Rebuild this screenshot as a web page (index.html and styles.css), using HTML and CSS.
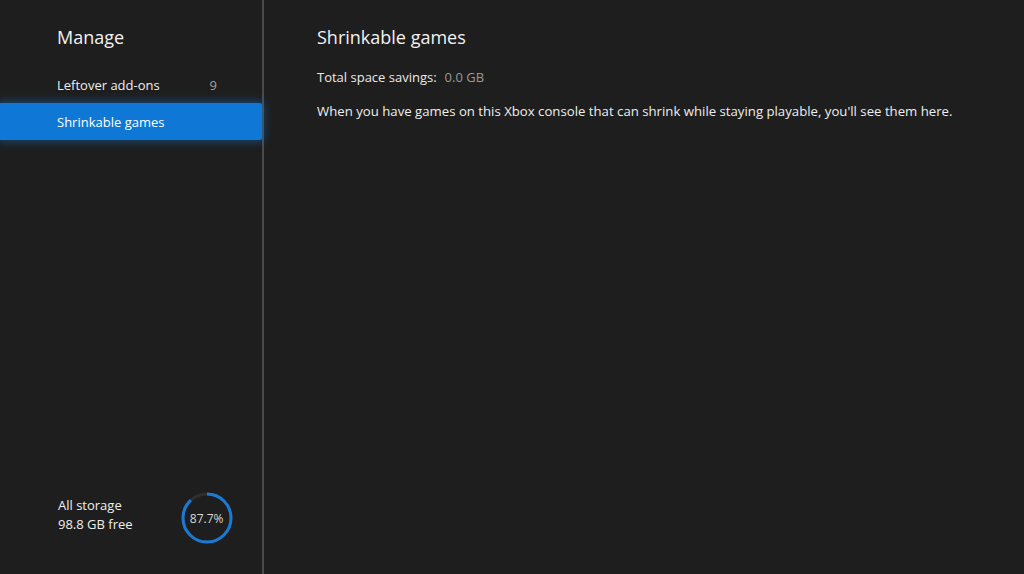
FILE: index.html
```html
<!DOCTYPE html>
<html>
<head>
<meta charset="utf-8">
<link rel="stylesheet" href="styles.css">
</head>
<body>
<div class="app">
  <aside class="sidebar">
    <h1 class="title">Manage</h1>
    <nav class="nav">
      <div class="item"><span>Leftover add-ons</span><span class="count">9</span></div>
      <div class="item active"><span>Shrinkable games</span></div>
    </nav>
    <div class="storage">
      <div class="storage-text">
        <div>All storage</div>
        <div>98.8 GB free</div>
      </div>
      <div class="ring">
        <svg width="54" height="54" viewBox="0 0 54 54">
          <circle cx="27" cy="27" r="24" fill="none" stroke="#2e2e2e" stroke-width="3"/>
          <circle cx="27" cy="27" r="24" fill="none" stroke="#1a7ad4" stroke-width="3" stroke-dasharray="132.25 150.8" transform="rotate(-90 27 27)"/>
        </svg>
        <span class="pct">87.7%</span>
      </div>
    </div>
  </aside>
  <main class="content">
    <h2 class="title">Shrinkable games</h2>
    <div class="savings"><span>Total space savings:</span><span class="muted">0.0 GB</span></div>
    <p class="desc">When you have games on this Xbox console that can shrink while staying playable, you'll see them here.</p>
  </main>
</div>
</body>
</html>
```
FILE: styles.css
```css
* { box-sizing: border-box; }
html, body { margin: 0; height: 100%; }
body {
  background: #1e1e1e;
  color: #f0f0f0;
  font-family: "Open Sans", "Noto Sans", sans-serif;
  overflow: hidden;
}
.app { display: flex; height: 574px; }
.sidebar {
  width: 264px;
  flex: none;
  border-right: 2px solid #4a4a4a;
  display: flex;
  flex-direction: column;
  padding-top: 24px;
}
.title {
  margin: 0;
  font-size: 18px;
  font-weight: 400;
  line-height: 26px;
  color: #f2f2f2;
}
.sidebar .title { padding-left: 57px; }
.nav { margin-top: 16px; display: flex; flex-direction: column; }
.item {
  height: 37px;
  display: flex;
  align-items: center;
  justify-content: space-between;
  padding: 0 45px 0 57px;
  font-size: 13px;
  color: #eeeeee;
}
.item .count { color: #a0a0a0; }
.item.active {
  width: 262px;
  background: #0f78d6;
  color: #ffffff;
  box-shadow: 0 0 8px 2px rgba(20, 120, 215, 0.45);
  border-radius: 0 2px 2px 0;
}
.storage {
  margin-top: auto;
  margin-bottom: 29px;
  display: flex;
  align-items: center;
  padding-left: 58px;
  gap: 47px;
}
.storage-text {
  font-size: 13px;
  line-height: 19px;
  color: #eeeeee;
  padding-bottom: 6px;
}
.ring { position: relative; width: 54px; height: 54px; }
.ring svg { display: block; }
.pct {
  position: absolute;
  inset: 0;
  display: flex;
  align-items: center;
  justify-content: center;
  font-size: 12px;
  color: #d8d8d8;
}
.content { padding: 24px 0 0 53px; flex: 1; }
.savings {
  margin-top: 18px;
  font-size: 13px;
  display: flex;
  gap: 8px;
  color: #eaeaea;
}
.muted { color: #9a9a9a; }
.desc {
  margin: 16px 0 0;
  font-size: 13.2px;
  color: #eeeeee;
}
```
